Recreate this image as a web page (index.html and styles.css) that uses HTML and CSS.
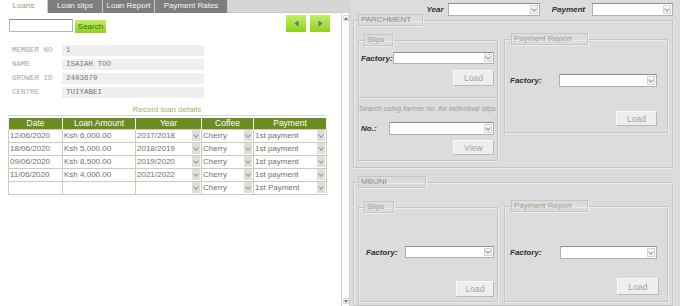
FILE: index.html
```html
<!DOCTYPE html>
<html lang="en">
<head>
    <meta charset="UTF-8">
    <title>Loans</title>
    <link rel="stylesheet" href="styles.css">
</head>
<body>
<div class="screen">

    <!-- Left: loans form -->
    <div class="left">
        <div class="tabs">
            <span class="tab active t1">Loans</span>
            <span class="tab t2">Loan slips</span>
            <span class="tab t3">Loan Report</span>
            <span class="tab t4">Payment Rates</span>
        </div>
        <div class="loans">
            <div class="toolbar">
                <div class="search">
                    <div class="search-box"></div>
                    <button class="btn-green search-btn">Search</button>
                </div>
                <div class="nav">
                    <button class="btn-green nav-btn"><svg width="5" height="7" viewBox="0 0 5 7"><path d="M4.5 0.5 L0.5 3.5 L4.5 6.5 Z" fill="#56708e"/></svg></button>
                    <button class="btn-green nav-btn"><svg width="5" height="7" viewBox="0 0 5 7"><path d="M0.5 0.5 L4.5 3.5 L0.5 6.5 Z" fill="#56708e"/></svg></button>
                </div>
            </div>

            <div class="member">
                <span class="m-label">MEMBER NO</span><span class="m-value">1</span>
                <span class="m-label">NAME</span><span class="m-value">ISAIAH TOO</span>
                <span class="m-label">GROWER ID</span><span class="m-value">2403670</span>
                <span class="m-label">CENTRE</span><span class="m-value">TUIYABEI</span>
            </div>

            <div class="caption">Record loan details</div>

            <table class="loan-table">
                <colgroup>
                    <col style="width:54px"><col style="width:73px"><col style="width:66px"><col style="width:52px"><col style="width:73px">
                </colgroup>
                <tr><th>Date</th><th>Loan Amount</th><th>Year</th><th>Coffee</th><th>Payment</th></tr>
                <tr>
                    <td>12/06/2020</td><td>Ksh 6,000.00</td>
                    <td><div class="cell-combo"><span>2017/2018</span><i class="arr"></i></div></td>
                    <td><div class="cell-combo"><span>Cherry</span><i class="arr"></i></div></td>
                    <td><div class="cell-combo"><span>1st payment</span><i class="arr"></i></div></td>
                </tr>
                <tr>
                    <td>18/06/2020</td><td>Ksh 5,000.00</td>
                    <td><div class="cell-combo"><span>2018/2019</span><i class="arr"></i></div></td>
                    <td><div class="cell-combo"><span>Cherry</span><i class="arr"></i></div></td>
                    <td><div class="cell-combo"><span>1st payment</span><i class="arr"></i></div></td>
                </tr>
                <tr>
                    <td>09/06/2020</td><td>Ksh 8,500.00</td>
                    <td><div class="cell-combo"><span>2019/2020</span><i class="arr"></i></div></td>
                    <td><div class="cell-combo"><span>Cherry</span><i class="arr"></i></div></td>
                    <td><div class="cell-combo"><span>1st payment</span><i class="arr"></i></div></td>
                </tr>
                <tr>
                    <td>11/06/2020</td><td>Ksh 4,000.00</td>
                    <td><div class="cell-combo"><span>2021/2022</span><i class="arr"></i></div></td>
                    <td><div class="cell-combo"><span>Cherry</span><i class="arr"></i></div></td>
                    <td><div class="cell-combo"><span>1st payment</span><i class="arr"></i></div></td>
                </tr>
                <tr>
                    <td></td><td></td>
                    <td><div class="cell-combo"><span></span><i class="arr"></i></div></td>
                    <td><div class="cell-combo"><span>Cherry</span><i class="arr"></i></div></td>
                    <td><div class="cell-combo"><span>1st Payment</span><i class="arr"></i></div></td>
                </tr>
            </table>
        </div>
    </div>

    <!-- Scrollbar -->
    <div class="scroll-col">
        <div class="scrollbar">
            <span class="sb-btn"><svg width="5" height="3" viewBox="0 0 5 3"><path d="M0 3 L2.5 0 L5 3 Z" fill="#555"/></svg></span>
            <span class="sb-btn"><svg width="5" height="3" viewBox="0 0 5 3"><path d="M0 0 L2.5 3 L5 0 Z" fill="#555"/></svg></span>
        </div>
    </div>

    <!-- Right: reports -->
    <div class="right">
        <div class="filters">
            <span class="lbl">Year</span>
            <div class="combo year-combo"><i class="arr"></i></div>
            <span class="lbl pay-lbl">Payment</span>
            <div class="combo pay-combo"><i class="arr"></i></div>
        </div>

        <fieldset class="group outer parchment">
            <legend class="legend grey" style="width:65px">PARCHMENT</legend>
            <div class="pair">
                <fieldset class="group slips">
                    <legend class="legend" style="width:29px">Slips</legend>
                    <div class="frow p-factory">
                        <span class="lbl">Factory:</span>
                        <div class="combo w104"><i class="arr"></i></div>
                    </div>
                    <div class="btn-row p-load"><button class="btn w41">Load</button></div>
                    <div class="divider"></div>
                    <div class="hint"><span>Search using farmer no. for individual slips</span></div>
                    <div class="frow p-no">
                        <span class="lbl">No.:</span>
                        <div class="combo w105 h13"><i class="arr"></i></div>
                    </div>
                    <div class="btn-row p-view"><button class="btn w41">View</button></div>
                </fieldset>
                <fieldset class="group report p-report">
                    <legend class="legend" style="width:77px">Payment Report</legend>
                    <div class="frow r-factory">
                        <span class="lbl">Factory:</span>
                        <div class="combo w98 h13"><i class="arr"></i></div>
                    </div>
                    <div class="btn-row r-load"><button class="btn w41">Load</button></div>
                </fieldset>
            </div>
        </fieldset>

        <fieldset class="group outer mbuni">
            <legend class="legend grey" style="width:68px">MBUNI</legend>
            <div class="pair">
                <fieldset class="group slips m-slips">
                    <legend class="legend" style="width:30px">Slips</legend>
                    <div class="frow m-factory">
                        <span class="lbl">Factory:</span>
                        <div class="combo w89"><i class="arr"></i></div>
                    </div>
                    <div class="btn-row m-load"><button class="btn w38">Load</button></div>
                </fieldset>
                <fieldset class="group report m-report">
                    <legend class="legend" style="width:77px">Payment Report</legend>
                    <div class="frow mr-factory">
                        <span class="lbl">Factory:</span>
                        <div class="combo w97 h13"><i class="arr"></i></div>
                    </div>
                    <div class="btn-row mr-load"><button class="btn w42">Load</button></div>
                </fieldset>
            </div>
        </fieldset>
    </div>

</div>
</body>
</html>
```

FILE: styles.css
```css
* {
    margin: 0;
    padding: 0;
    box-sizing: border-box;
    font-family: "Liberation Sans", Arial, sans-serif;
}
body {
    width: 680px;
    height: 306px;
    overflow: hidden;
    background-color: #dcdcdc;
}
.screen {
    display: grid;
    grid-template-columns: 341px 9px 330px;
    height: 306px;
}

/* ---------- left side ---------- */
.left {
    display: flex;
    flex-direction: column;
}
.tabs {
    height: 13px;
    display: flex;
    background-color: #d6d6d6;
    border-bottom: 1px solid #c4c4c4;
}
.tab {
    height: 13px;
    font-size: 8px;
    line-height: 12px;
    text-align: center;
    color: #f4f4f4;
    background-color: #7e7e7e;
    border-right: 1px solid #c9c9c9;
}
.tab.active {
    background-color: #fff;
    color: #93a27a;
}
.t1 { width: 48px; }
.t2 { width: 55px; }
.t3 { width: 52px; }
.t4 { width: 73px; }

.loans {
    flex: 1;
    background-color: #fff;
}
.toolbar {
    display: flex;
    justify-content: space-between;
    padding: 2px 11px 0 9px;
}
.search {
    display: flex;
    align-items: flex-start;
    gap: 2px;
    margin-top: 4px;
}
.search-box {
    width: 64px;
    height: 13px;
    border: 1px solid #b4b4b4;
    border-top-color: #8a8a8a;
}
.btn-green {
    border: none;
    background: linear-gradient(#c2ee66, #8fd11f);
    color: #3f6d12;
    font-size: 8px;
}
.search-btn {
    width: 31px;
    height: 13px;
    margin-top: 1px;
}
.nav {
    display: flex;
    gap: 4px;
}
.nav-btn {
    width: 20px;
    height: 17px;
    display: flex;
    align-items: center;
    justify-content: center;
}

.member {
    display: grid;
    grid-template-columns: 50px 142px;
    row-gap: 3px;
    margin: 12px 0 0 12px;
    font-size: 7.5px;
    line-height: 11px;
}
.member span {
    font-family: "Liberation Mono", "Courier New", monospace;
}
.m-label {
    color: #a8a8a8;
}
.m-value {
    height: 11px;
    background-color: #efefef;
    color: #777;
    padding-left: 4px;
}

.caption {
    width: 318px;
    margin: 8px 0 0 8px;
    padding-bottom: 1px;
    border-bottom: 1px solid #d9d9d9;
    text-align: center;
    color: #9db36e;
    font-size: 8px;
    line-height: 8px;
}
.loan-table {
    margin: 2px 0 0 8px;
    width: 318px;
    table-layout: fixed;
    border-collapse: collapse;
    font-size: 8px;
}
.loan-table th {
    height: 11px;
    background-color: #6b8c20;
    color: #fff;
    font-weight: normal;
    font-size: 8.5px;
    border-left: 1px solid #f0f0f0;
    border-right: 1px solid #f0f0f0;
    line-height: 10px;
}
.loan-table td {
    height: 13px;
    border: 1px solid #c5cfb3;
    color: #707070;
    padding: 0 0 0 1px;
    line-height: 11px;
    white-space: nowrap;
    overflow: hidden;
}
.cell-combo {
    display: flex;
    justify-content: space-between;
    align-items: center;
}
.cell-combo .arr {
    width: 8px;
    height: 11px;
    margin-right: 1px;
    background-color: #dedede;
}

/* shared drop-down arrow */
.arr {
    display: flex;
    align-items: center;
    justify-content: center;
    font-style: normal;
}
.arr::after {
    content: "";
    width: 3px;
    height: 3px;
    border-right: 1px solid #9a9a9a;
    border-bottom: 1px solid #9a9a9a;
    transform: translateY(-1px) rotate(45deg);
}

/* ---------- scrollbar ---------- */
.scroll-col {
    display: flex;
    flex-direction: column;
    padding-top: 13px;
    background: linear-gradient(#d6d6d6 13px, #fff 13px);
}
.scrollbar {
    flex: 1;
    display: flex;
    flex-direction: column;
    justify-content: space-between;
    align-items: center;
    border-left: 1px solid #cfcfcf;
    border-right: 1px solid #cfcfcf;
    padding: 2px 0 2px;
    background-color: #fff;
}
.sb-btn {
    width: 6px;
    height: 6px;
    display: flex;
    align-items: center;
    justify-content: center;
    border: 1px solid #dadada;
}

/* ---------- right side ---------- */
.right {
    display: flex;
    flex-direction: column;
}
.filters {
    display: flex;
    align-items: center;
    justify-content: flex-end;
    padding: 3px 7px 0 0;
    height: 16px;
    margin-bottom: -2px;
}
.lbl {
    font-size: 8px;
    font-weight: bold;
    font-style: italic;
    color: #2e2e2e;
}
.filters .lbl {
    margin-right: 4px;
}
.filters .pay-lbl {
    margin-left: 12px;
    margin-right: 7px;
}
.combo {
    height: 12px;
    background-color: #fff;
    border: 1px solid #b0b0b0;
    border-top-color: #8e8e8e;
    display: flex;
    justify-content: flex-end;
}
.combo .arr {
    width: 8px;
    margin: 1px;
    border: 1px solid #d4d4d4;
    background-color: #f4f4f4;
}
.year-combo { width: 92px; height: 13px; }
.pay-combo { width: 81px; height: 13px; }
.w104 { width: 104px; }
.w105 { width: 105px; }
.w98 { width: 98px; }
.w97 { width: 97px; }
.w89 { width: 89px; }
.h13 { height: 13px; }

.group {
    border: 1px solid #c6c6c6;
    box-shadow: 1px 1px 0 #ececec, inset 1px 1px 0 #ececec;
    min-width: 0;
}
.legend {
    height: 12px;
    border: 1px solid #c6c6c6;
    box-shadow: 1px 1px 0 #ececec;
    padding-left: 2px;
    font-size: 8px;
    line-height: 10px;
    color: #9ba689;
    white-space: nowrap;
}
.legend.grey {
    color: #8a8a8a;
}
.outer {
    margin: 0 7px 0 3px;
    padding: 0 4px;
}
.parchment {
    height: 154px;
}
.mbuni {
    margin-top: 8px;
    height: 130px;
}
.pair {
    display: flex;
    align-items: flex-start;
    gap: 6px;
}
.parchment .pair { padding-top: 8px; }
.mbuni .pair { padding-top: 13px; }

.slips {
    width: 140px;
    padding: 0;
}
.slips .legend { margin-left: 5px; }
.report {
    width: 164px;
    margin-top: -1px;
    padding: 0;
}
.report .legend { margin-left: 6px; }

.frow {
    display: flex;
    align-items: center;
    justify-content: space-between;
    padding: 0 3px 0 2px;
}
.btn-row {
    display: flex;
    justify-content: flex-end;
    padding-right: 3px;
}
.btn {
    height: 16px;
    background-color: #eeeeee;
    border: 1px solid #fafafa;
    border-right-color: #b9b9b9;
    border-bottom-color: #b9b9b9;
    color: #a3a3a3;
    font-size: 8.5px;
}
.w41 { width: 41px; }
.w38 { width: 38px; }
.w42 { width: 42px; }

.p-factory { margin-top: 6px; }
.p-load { margin-top: 6px; }
.divider {
    margin-top: 11px;
    border-top: 1px solid #c6c6c6;
    border-bottom: 1px solid #ececec;
}
.hint {
    display: flex;
    justify-content: flex-end;
    overflow: hidden;
    margin-top: 5px;
    padding-right: 1px;
}
.hint span {
    white-space: nowrap;
    font-size: 7.3px;
    font-style: italic;
    color: #9aa08e;
}
.p-no { margin-top: 9px; padding-left: 2px; }
.p-view { margin-top: 5px; }
.p-view .btn { height: 15px; }
.parchment .slips { height: 127px; }

.p-report { height: 100px; }
.r-factory { margin-top: 29px; padding: 0 10px 0 5px; }
.r-load { margin-top: 24px; padding-right: 10px; }
.r-load .btn { height: 15px; }

.m-slips { height: 101px; }
.m-factory { margin-top: 33px; padding-left: 7px; }
.m-load { margin-top: 23px; }
.m-report { height: 102px; }
.mr-factory { margin-top: 34px; padding: 0 10px 0 5px; }
.mr-load { margin-top: 19px; padding-right: 8px; }
.mr-load .btn { height: 17px; }
```
